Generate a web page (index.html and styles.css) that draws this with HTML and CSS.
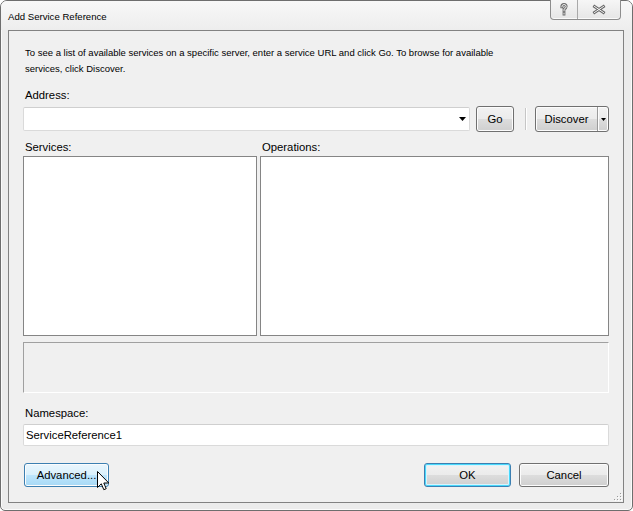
FILE: index.html
```html
<!DOCTYPE html>
<html lang="en">
<head>
    <meta charset="UTF-8">
    <title>Add Service Reference</title>
    <link rel="stylesheet" href="styles.css">
</head>
<body>
    <div class="window">
        <div class="titlebar">
            <span class="title">Add Service Reference</span>
            <div class="caption-buttons">
                <div class="cap-btn help">
                    <svg width="26" height="19" viewBox="0 0 26 19">
                        <path d="M10.8 6.8 Q10.8 4.5 13 4.5 Q15.2 4.5 15.2 6.6 Q15.2 8.2 13 9.2 L13 10.8 M13 13.2 L13 14" fill="none" stroke="#6a6a6a" stroke-width="2.8" stroke-linecap="square"/>
                        <path d="M10.8 6.8 Q10.8 4.5 13 4.5 Q15.2 4.5 15.2 6.6 Q15.2 8.2 13 9.2 L13 10.8 M13 13.2 L13 14" fill="none" stroke="#fff" stroke-width="0.9" stroke-linecap="square"/>
                    </svg>
                </div>
                <div class="cap-btn close">
                    <svg width="42" height="19" viewBox="0 0 42 19">
                        <path d="M16.5 6.5 L25.5 12.5 M25.5 6.5 L16.5 12.5" fill="none" stroke="#6a6a6a" stroke-width="2.8" stroke-linecap="square"/>
                        <path d="M16.5 6.5 L25.5 12.5 M25.5 6.5 L16.5 12.5" fill="none" stroke="#fff" stroke-width="0.9" stroke-linecap="square"/>
                    </svg>
                </div>
            </div>
        </div>

        <div class="client">
            <p class="intro">
                <span>To see a list of available services on a specific server, enter a service URL and click Go. To browse for available</span>
                <span>services, click Discover.</span>
            </p>

            <label class="field-label">Address:</label>
            <div class="address-row">
                <div class="combo">
                    <span class="combo-text"></span>
                    <svg class="drop-arrow" width="7" height="4" viewBox="0 0 7 4"><path d="M0 0 H7 L3.5 4 Z" fill="#000"/></svg>
                </div>
                <button class="btn go-btn">Go</button>
                <span class="separator"></span>
                <div class="btn split-btn">
                    <span class="split-main">Discover</span>
                    <span class="split-arrow">
                        <svg width="5" height="3" viewBox="0 0 5 3"><path d="M0 0 H5 L2.5 3 Z" fill="#000"/></svg>
                    </span>
                </div>
            </div>

            <div class="lists">
                <div class="list-col services-col">
                    <label class="field-label">Services:</label>
                    <div class="listbox"></div>
                </div>
                <div class="list-col operations-col">
                    <label class="field-label">Operations:</label>
                    <div class="listbox"></div>
                </div>
            </div>

            <div class="status-panel"></div>

            <label class="field-label namespace-label">Namespace:</label>
            <div class="textbox">ServiceReference1</div>

            <div class="footer">
                <button class="btn advanced-btn">Advanced...</button>
                <button class="btn ok-btn">OK</button>
                <button class="btn cancel-btn">Cancel</button>
            </div>

            <!-- size grip -->
            <svg class="grip" width="8" height="8" viewBox="0 0 8 8">
                <g fill="#fff">
                    <rect x="7" y="1" width="1" height="1"/>
                    <rect x="4" y="4" width="1" height="1"/><rect x="7" y="4" width="1" height="1"/>
                    <rect x="1" y="7" width="1" height="1"/><rect x="4" y="7" width="1" height="1"/><rect x="7" y="7" width="1" height="1"/>
                </g>
                <g fill="#9a9a9a">
                    <rect x="6" y="0" width="1" height="1"/>
                    <rect x="3" y="3" width="1" height="1"/><rect x="6" y="3" width="1" height="1"/>
                    <rect x="0" y="6" width="1" height="1"/><rect x="3" y="6" width="1" height="1"/><rect x="6" y="6" width="1" height="1"/>
                </g>
            </svg>

            <!-- mouse pointer over the Advanced button -->
            <svg class="cursor" width="13" height="20" viewBox="0 0 13 20">
                <path d="M0.5 0.5 L0.5 16.5 L4.3 12.8 L6.8 18.7 L9.2 17.7 L6.8 12 L11.8 12 Z" fill="#fff" stroke="#000" stroke-width="1" stroke-linejoin="miter"/>
            </svg>
        </div>
    </div>
</body>
</html>
```

FILE: styles.css
```css
/* General Reset */
* {
    margin: 0;
    padding: 0;
    box-sizing: border-box;
}

body {
    font-family: "Liberation Sans", Arial, sans-serif;
    font-size: 11.3px;
    color: #000;
    background-color: #ffffff;
}

/* Window frame */
.window {
    width: 633px;
    height: 511px;
    border: 1px solid #6e6e6e;
    border-radius: 7px 7px 5px 5px;
    background-color: #ececec;
    box-shadow: inset 0 0 0 1px #fbfbfb;
    display: flex;
    flex-direction: column;
}

.titlebar {
    height: 29px;
    display: flex;
    align-items: center;
    padding-left: 7px;
    border-radius: 6px 6px 0 0;
    background: linear-gradient(#f8f8f8, #ededed);
}

.title {
    font-size: 9.6px;
    padding-top: 1px;
}

.caption-buttons {
    margin-left: auto;
    margin-right: 11px;
    margin-top: -1px;
    align-self: flex-start;
    display: flex;
    height: 20px;
    border: 1px solid #8d8d8d;
    border-top: none;
    border-radius: 0 0 4px 4px;
    background: linear-gradient(#f6f6f6, #e6e6e6);
    box-shadow: inset 0 -1px 0 #fafafa;
}

.cap-btn {
    display: flex;
    align-items: center;
}

.cap-btn.help {
    width: 27px;
    border-right: 1px solid #a9a9a9;
}

.cap-btn.close {
    width: 42px;
}

/* Client area */
.client {
    position: relative;
    margin: 0 8px 0 7px;
    height: 473px;
    border: 1px solid #828282;
    background-color: #f0f0f0;
    padding: 14px 14px 15px;
    display: flex;
    flex-direction: column;
}

.intro {
    font-size: 9.5px;
    height: 32px;
    line-height: 16px;
    padding-left: 2px;
    display: flex;
    flex-direction: column;
    white-space: nowrap;
}

.field-label {
    display: block;
    line-height: 16px;
    padding-left: 2px;
}

.client > .field-label {
    margin-top: 10px;
}

.address-row {
    margin-top: 3px;
    height: 26px;
    display: flex;
    align-items: flex-start;
}

.combo {
    margin-top: 1px;
    width: 447px;
    height: 24px;
    background-color: #fff;
    border: 1px solid #dadada;
    border-top-color: #cfcfcf;
    border-radius: 2px;
    display: flex;
    align-items: center;
    justify-content: flex-end;
    padding-right: 3px;
}

.drop-arrow {
    display: block;
}

/* Buttons */
.btn {
    font-family: inherit;
    font-size: 11.3px;
    color: #000;
    height: 26px;
    border: 1px solid #707070;
    border-radius: 3px;
    background: linear-gradient(#f2f2f2 0%, #ebebeb 50%, #dddddd 50%, #cfcfcf 100%);
    box-shadow: inset 0 0 0 1px #fcfcfc;
    display: flex;
    align-items: center;
    justify-content: center;
}

.go-btn {
    width: 38px;
    margin-left: 6px;
}

.separator {
    width: 2px;
    height: 22px;
    margin: 2px 8px 0 11px;
    border-left: 1px solid #c6c6c6;
    border-right: 1px solid #ffffff;
}

.split-btn {
    width: 74px;
    padding: 0;
    justify-content: flex-start;
}

.split-main {
    width: 61px;
    text-align: center;
}

.split-arrow {
    flex: 1;
    height: 100%;
    display: flex;
    align-items: center;
    justify-content: center;
    border-left: 1px solid #9a9a9a;
    box-shadow: inset 1px 0 0 #fdfdfd;
}

.split-arrow svg {
    display: block;
}

/* Lists */
.lists {
    margin-top: 7px;
    display: flex;
    gap: 3px;
}

.list-col {
    display: flex;
    flex-direction: column;
}

.services-col {
    width: 234px;
}

.operations-col {
    width: 349px;
}

.listbox {
    margin-top: 1px;
    height: 180px;
    background-color: #fff;
    border: 1px solid #858585;
}

.status-panel {
    margin-top: 6px;
    height: 51px;
    border: 1px solid #ffffff;
    border-top-color: #a0a0a0;
    border-left-color: #a0a0a0;
}

.client > .namespace-label {
    margin-top: 12px;
}

.textbox {
    margin-top: 3px;
    height: 22px;
    background-color: #fff;
    border: 1px solid #dadada;
    border-top-color: #cfcfcf;
    border-radius: 2px;
    padding-left: 2px;
    display: flex;
    align-items: center;
}

/* Footer buttons */
.footer {
    margin-top: 17px;
    display: flex;
}

.footer .btn {
    height: 24px;
}

.advanced-btn {
    width: 85px;
    margin-left: 1px;
    border-color: #3c7fb1;
    background: linear-gradient(#eaf6fd 0%, #d9f0fc 50%, #bee6fd 50%, #a7d9f5 100%);
}

.ok-btn {
    width: 87px;
    margin-left: auto;
    border-color: #3c7fb1;
    box-shadow: inset 0 0 0 1px #48d8fb, inset 0 0 0 2px #d8f3fd;
}

.cancel-btn {
    width: 90px;
    margin-left: 8px;
}

.grip {
    position: absolute;
    right: 1px;
    bottom: 1px;
}

.cursor {
    position: absolute;
    left: 88px;
    top: 440px;
}
```
